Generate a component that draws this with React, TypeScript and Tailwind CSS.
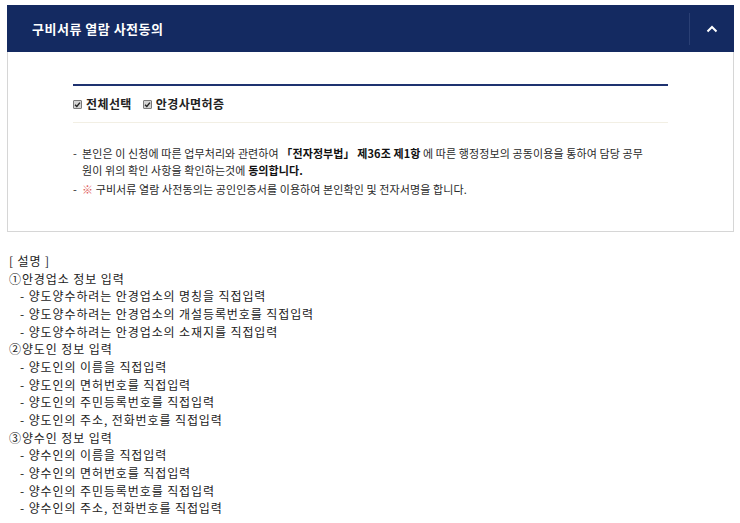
import React from "react";

const font = { fontFamily: '"Noto Sans CJK KR", "Noto Sans", sans-serif' };

function Check() {
  return (
    <span className="inline-flex h-[9px] w-[9px] items-center justify-center rounded-[1px] border border-[#7a7a7a] bg-[#d4d4d4]">
      <svg width="7" height="7" viewBox="0 0 8 8">
        <path d="M1.2 4.2 L3.2 6.2 L6.8 1.8" fill="none" stroke="#222" strokeWidth="1.6" />
      </svg>
    </span>
  );
}

const desc: { t: string; sub?: boolean }[] = [
  { t: "[ 설명 ]" },
  { t: "①안경업소 정보 입력" },
  { t: "- 양도양수하려는 안경업소의 명칭을 직접입력", sub: true },
  { t: "- 양도양수하려는 안경업소의 개설등록번호를 직접입력", sub: true },
  { t: "- 양도양수하려는 안경업소의 소재지를 직접입력", sub: true },
  { t: "②양도인 정보 입력" },
  { t: "- 양도인의 이름을 직접입력", sub: true },
  { t: "- 양도인의 면허번호를 직접입력", sub: true },
  { t: "- 양도인의 주민등록번호를 직접입력", sub: true },
  { t: "- 양도인의 주소, 전화번호를 직접입력", sub: true },
  { t: "③양수인 정보 입력" },
  { t: "- 양수인의 이름을 직접입력", sub: true },
  { t: "- 양수인의 면허번호를 직접입력", sub: true },
  { t: "- 양수인의 주민등록번호를 직접입력", sub: true },
  { t: "- 양수인의 주소, 전화번호를 직접입력", sub: true },
];

export default function App() {
  return (
    <div className="min-h-[523px] w-[740px] bg-white pt-[5px]" style={font}>
      <div className="mx-[7px] w-[727px]">
        <div className="flex h-[47px] items-center justify-between bg-[#142a61]">
          <span className="pl-[25px] text-[13px] font-bold tracking-[0.5px] text-white">
            구비서류 열람 사전동의
          </span>
          <div className="flex h-[32px] w-[45px] items-center justify-center border-l border-[#2a3f74]">
            <svg width="12" height="8" viewBox="0 0 12 8">
              <path d="M1.5 6.5 L6 2 L10.5 6.5" fill="none" stroke="#fff" strokeWidth="2" />
            </svg>
          </div>
        </div>
        <div className="border border-t-0 border-[#d6d6d6] px-[65px] pb-[33px] pt-[32px]">
          <div className="h-[2px] bg-[#1e3270]" />
          <div className="flex h-[36px] items-center text-[12px] font-bold tracking-[0.4px] text-[#222]">
            <span className="flex items-center gap-[4px]">
              <Check />
              <span>전체선택</span>
            </span>
            <span className="ml-[11px] flex items-center gap-[4px]">
              <Check />
              <span>안경사면허증</span>
            </span>
          </div>
          <div className="h-[1px] bg-[#f2efe4]" />
          <div className="pt-[22px] text-[11px] leading-[17px] tracking-[0.1px] text-[#2a2a2a]">
            <p className="flex">
              <span className="w-[9px] shrink-0">-</span>
              <span>
                본인은 이 신청에 따른 업무처리와 관련하여{" "}
                <b className="text-[#111]">「전자정부법」 제36조 제1항</b> 에 따른 행정정보의
                공동이용을 통하여 담당 공무
                <br />
                원이 위의 확인 사항을 확인하는것에 <b className="text-[#111]">동의합니다.</b>
              </span>
            </p>
            <p className="mt-[2px] flex">
              <span className="w-[9px] shrink-0">-</span>
              <span>
                <span className="text-[#e05a5a]">※</span> 구비서류 열람 사전동의는 공인인증서를
                이용하여 본인확인 및 전자서명을 합니다.
              </span>
            </p>
          </div>
        </div>
      </div>
      <div className="mt-[20px] pl-[9px] text-[12px] leading-[17.65px] tracking-[0.9px] text-[#222]">
        {desc.map((d, i) => (
          <div key={i} className={d.sub ? "pl-[11px]" : ""}>
            {d.t}
          </div>
        ))}
      </div>
    </div>
  );
}
